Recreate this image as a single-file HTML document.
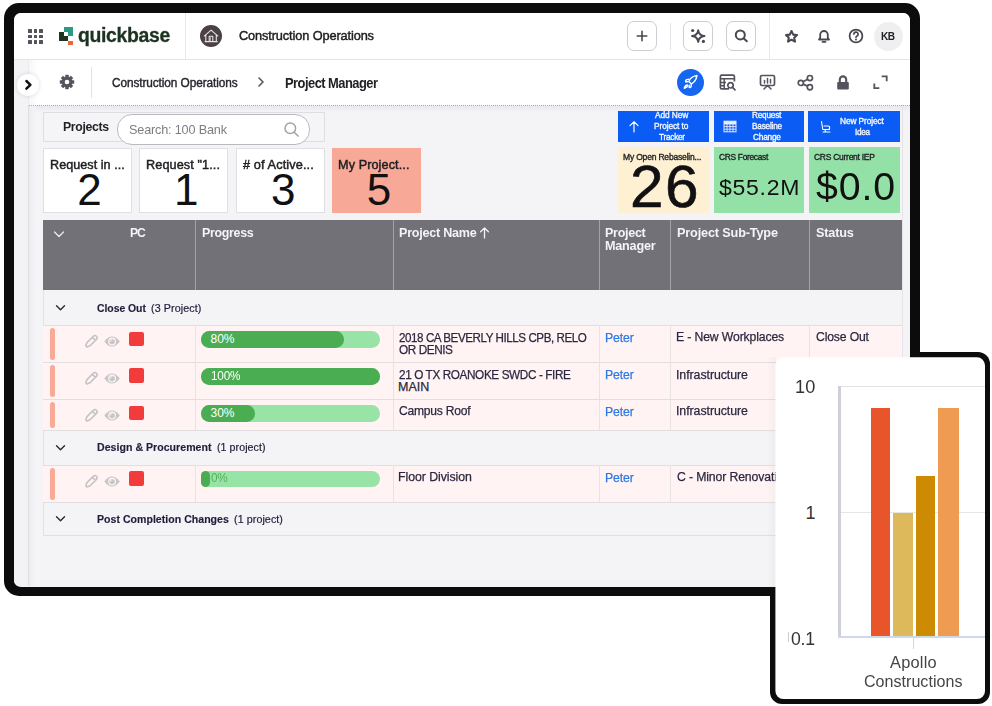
<!DOCTYPE html>
<html><head><meta charset="utf-8"><style>
html,body{margin:0;padding:0;}
body{width:992px;height:706px;position:relative;overflow:hidden;background:#fff;font-family:"Liberation Sans",sans-serif;}
.t{position:absolute;white-space:nowrap;line-height:1;font-family:"Liberation Sans",sans-serif;}
.L{position:absolute;left:0;top:0;width:992px;height:706px;}
</style></head><body>
<div class="L" style="filter:blur(0.7px)"><div style="position:absolute;left:4px;top:3px;width:916.00px;height:593.20px;background:#0c0c0c;border-radius:15px;"></div><div style="position:absolute;left:770px;top:352px;width:220.00px;height:352.00px;background:#0c0c0c;border-radius:12px;"></div></div>
<div class="L" style="clip-path:inset(13px 82px 119px 14px round 7px)"><div style="position:absolute;left:14px;top:13px;width:896.00px;height:574.00px;background:#f4f4f7;"></div><div style="position:absolute;left:14px;top:13px;width:896.00px;height:46.00px;background:#ffffff;"></div><div style="position:absolute;left:14px;top:59px;width:896.00px;height:1.00px;background:#e4e4e8;"></div><div style="position:absolute;left:185px;top:13px;width:1.00px;height:46.00px;background:#e8e8ec;"></div><div style="position:absolute;left:769px;top:13px;width:1.00px;height:46.00px;background:#e8e8ec;"></div><div style="position:absolute;left:28px;top:60px;width:882.00px;height:45.00px;background:#ffffff;"></div><div style="position:absolute;left:14px;top:60px;width:14.00px;height:526.00px;background:#f3f3f5;"></div><div style="position:absolute;left:28px;top:60px;width:1.00px;height:45.00px;background:#ebebee;"></div><div style="position:absolute;left:29px;top:60px;width:9.00px;height:45.00px;background:linear-gradient(90deg,rgba(0,0,0,0.035),rgba(0,0,0,0));"></div><div style="position:absolute;left:28px;top:105px;width:1.00px;height:481.00px;background:#dedee2;"></div><div style="position:absolute;left:29px;top:105px;width:881px;height:0;border-top:1px dotted #a9a9ae"></div><div style="position:absolute;left:29px;top:106px;width:881.00px;height:6.00px;background:linear-gradient(#e9e9ed,#f4f4f7);"></div><div style="position:absolute;left:29px;top:106px;width:6.00px;height:480.00px;background:linear-gradient(90deg,#ececf0,#f4f4f7);"></div><div style="position:absolute;left:902.4px;top:105px;width:1.00px;height:482.00px;background:#e4e4e8;"></div><div style="position:absolute;left:28.2px;top:29.2px;width:3.70px;height:3.70px;background:#57535d;border-radius:0.6px;"></div><div style="position:absolute;left:28.2px;top:34.55px;width:3.70px;height:3.70px;background:#57535d;border-radius:0.6px;"></div><div style="position:absolute;left:28.2px;top:39.9px;width:3.70px;height:3.70px;background:#57535d;border-radius:0.6px;"></div><div style="position:absolute;left:33.55px;top:29.2px;width:3.70px;height:3.70px;background:#57535d;border-radius:0.6px;"></div><div style="position:absolute;left:33.55px;top:34.55px;width:3.70px;height:3.70px;background:#57535d;border-radius:0.6px;"></div><div style="position:absolute;left:33.55px;top:39.9px;width:3.70px;height:3.70px;background:#57535d;border-radius:0.6px;"></div><div style="position:absolute;left:38.9px;top:29.2px;width:3.70px;height:3.70px;background:#57535d;border-radius:0.6px;"></div><div style="position:absolute;left:38.9px;top:34.55px;width:3.70px;height:3.70px;background:#57535d;border-radius:0.6px;"></div><div style="position:absolute;left:38.9px;top:39.9px;width:3.70px;height:3.70px;background:#57535d;border-radius:0.6px;"></div><div style="position:absolute;left:59px;top:31.5px;width:9.00px;height:9.00px;background:#1f3523;"></div><div style="position:absolute;left:63.5px;top:27px;width:9.00px;height:9.00px;background:#2b9a80;"></div><div style="position:absolute;left:63.5px;top:31.5px;width:4.50px;height:4.50px;background:#ffffff;"></div><div style="position:absolute;left:68px;top:40.5px;width:4.70px;height:4.50px;background:#f0643a;"></div><div style="position:absolute;left:200px;top:25px;width:22px;height:22px;border-radius:50%;background:#4b4144"></div><svg style="position:absolute;left:200px;top:25px" width="22" height="22" viewBox="0 0 22 22"><path d="M3.9 11.4 L11.1 5.2 L18.2 11.4 M5.8 10 V16.4 M16.3 10 V16.4 M9.2 16.4 V11.3 H12.8 V16.4 M4.6 16.6 H17.6" fill="none" stroke="#e6e3e4" stroke-width="1.1" stroke-linejoin="round"/><path d="M10.4 12.2 V16.2" stroke="#e6e3e4" stroke-width="0.7"/></svg><div style="position:absolute;left:626.5px;top:21px;width:28px;height:28px;border:1px solid #cdcdd2;border-radius:7px;background:#fff"></div><div style="position:absolute;left:683.2px;top:21px;width:28px;height:28px;border:1px solid #cdcdd2;border-radius:7px;background:#fff"></div><div style="position:absolute;left:726.2px;top:21px;width:28px;height:28px;border:1px solid #cdcdd2;border-radius:7px;background:#fff"></div><div style="position:absolute;left:670px;top:22.5px;width:1.00px;height:27.20px;background:#e4e4e8;"></div><svg style="position:absolute;left:634px;top:28px" width="16" height="16" viewBox="0 0 16 16"><path d="M8 3.2 V12.8 M3.2 8 H12.8" stroke="#4b4751" stroke-width="1.6" stroke-linecap="round"/></svg><svg style="position:absolute;left:690px;top:28px" width="16" height="16" viewBox="0 0 16 16"><path d="M8.2 2.3 Q8.9 7.3 14.4 8.1 Q8.9 8.9 8.2 13.8 Q7.5 8.9 2.1 8.1 Q7.5 7.3 8.2 2.3 Z" fill="none" stroke="#4b4751" stroke-width="2" stroke-linejoin="round"/><circle cx="2.7" cy="2.5" r="1.6" fill="#4b4751"/><circle cx="13.4" cy="13.4" r="1.6" fill="#4b4751"/></svg><svg style="position:absolute;left:732px;top:28px" width="16" height="16" viewBox="0 0 16 16"><circle cx="8.3" cy="6.9" r="4.5" fill="none" stroke="#4b4751" stroke-width="2"/><path d="M11.6 10.2 L14.8 13.3" stroke="#4b4751" stroke-width="2" stroke-linecap="round"/></svg><svg style="position:absolute;left:783px;top:28px" width="17" height="16" viewBox="0 0 17 16"><path d="M8.5 3 L10.2 6.6 L14 7.1 L11.2 9.7 L12 13.6 L8.5 11.7 L5 13.6 L5.8 9.7 L3 7.1 L6.8 6.6 Z" fill="none" stroke="#4b4751" stroke-width="2.1" stroke-linejoin="round"/></svg><svg style="position:absolute;left:816px;top:28px" width="16" height="16" viewBox="0 0 16 16"><path d="M3 11.5 H13 L11.8 9.8 V6.8 A3.8 3.8 0 0 0 4.2 6.8 V9.8 Z" fill="none" stroke="#4b4751" stroke-width="1.8" stroke-linejoin="round"/><path d="M6.5 13.8 H9.5" stroke="#4b4751" stroke-width="1.8" stroke-linecap="round"/></svg><svg style="position:absolute;left:848px;top:28px" width="16" height="16" viewBox="0 0 16 16"><circle cx="8" cy="8" r="6.4" fill="none" stroke="#4b4751" stroke-width="1.8"/><path d="M5.9 6.3 A2.1 2.1 0 1 1 8.6 8.2 Q8 8.5 8 9.4" fill="none" stroke="#4b4751" stroke-width="1.6" stroke-linecap="round"/><circle cx="8" cy="11.5" r="1" fill="#4b4751"/></svg><div style="position:absolute;left:874px;top:22px;width:29px;height:29px;border-radius:50%;background:#efeff0"></div><div style="position:absolute;left:17.2px;top:74.3px;width:21.5px;height:21.5px;border-radius:50%;background:#fff;box-shadow:0 0 4px rgba(0,0,0,0.14)"></div><svg style="position:absolute;left:22px;top:78px" width="12" height="14" viewBox="0 0 12 14"><path d="M4.4 3 L8.4 6.8 L4.4 10.6" fill="none" stroke="#111" stroke-width="2.5" stroke-linecap="round" stroke-linejoin="round"/></svg><svg style="position:absolute;left:58.6px;top:74.3px" width="16" height="16" viewBox="0 0 16 16"><g transform="translate(8 8)"><path d="M-1.57 -5.06 L-1.41 -6.96 L1.41 -6.96 L1.57 -5.06 L2.47 -4.69 L3.92 -5.92 L5.92 -3.92 L4.69 -2.47 L5.06 -1.57 L6.96 -1.41 L6.96 1.41 L5.06 1.57 L4.69 2.47 L5.92 3.92 L3.92 5.92 L2.47 4.69 L1.57 5.06 L1.41 6.96 L-1.41 6.96 L-1.57 5.06 L-2.47 4.69 L-3.92 5.92 L-5.92 3.92 L-4.69 2.47 L-5.06 1.57 L-6.96 1.41 L-6.96 -1.41 L-5.06 -1.57 L-4.69 -2.47 L-5.92 -3.92 L-3.92 -5.92 L-2.47 -4.69 Z" fill="#56525e" stroke="#56525e" stroke-width="0.5" stroke-linejoin="round"/><circle r="2.3" fill="#fff"/></g></svg><div style="position:absolute;left:91px;top:67px;width:1.00px;height:31.00px;background:#e2e2e6;"></div><svg style="position:absolute;left:256px;top:76px" width="10" height="12" viewBox="0 0 10 12"><path d="M3 2 L7 6 L3 10" fill="none" stroke="#555" stroke-width="1.6" stroke-linecap="round" stroke-linejoin="round"/></svg><div style="position:absolute;left:677.3px;top:68.8px;width:27px;height:27px;border-radius:50%;background:#1766f0"></div><svg style="position:absolute;left:676px;top:68px" width="30" height="30" viewBox="0 0 30 30"><g fill="none" stroke="#fff" stroke-width="1.4" stroke-linejoin="round"><path d="M12.9 13.4 Q14.6 8.6 21 7.4 Q19.9 13.8 15.3 15.9 Z"/><path d="M13 11.3 L10.6 11.6 Q9.3 12.4 9.6 13.8 L12.4 13.7"/><path d="M15.4 16 L15.1 18.6 Q14.4 19.8 13.2 19.6 L13.3 16.8"/><path d="M11.7 16.6 Q9 17 8.3 20.2 Q11.5 19.6 12 17.2"/></g></svg><svg style="position:absolute;left:719px;top:73.5px" width="18" height="18" viewBox="0 0 18 18"><path d="M10 14.8 H2.8 A1.4 1.4 0 0 1 1.4 13.4 V2.6 A1.4 1.4 0 0 1 2.8 1.2 H14 A1.4 1.4 0 0 1 15.4 2.6 V7.5" fill="none" stroke="#56525e" stroke-width="1.7"/><path d="M1.4 4.8 H15.4 M1.4 8.4 H7 M1.4 11.8 H6 M5.2 4.8 V14.8" stroke="#56525e" stroke-width="1.5"/><circle cx="11.5" cy="11.3" r="2.7" fill="none" stroke="#56525e" stroke-width="1.7"/><path d="M13.4 13.2 L16 15.8" stroke="#56525e" stroke-width="1.7" stroke-linecap="round"/></svg><svg style="position:absolute;left:759px;top:74px" width="17" height="17" viewBox="0 0 17 17"><rect x="1.5" y="1.5" width="14" height="10" rx="1.5" fill="none" stroke="#56525e" stroke-width="1.7"/><path d="M5.5 9 V6.5 M8.5 9 V4.5 M11.5 9 V5.5 M8.5 11.5 L5 15 M8.5 11.5 L12 15" stroke="#56525e" stroke-width="1.5" stroke-linecap="round"/></svg><svg style="position:absolute;left:797px;top:73.5px" width="17" height="17" viewBox="0 0 17 17"><circle cx="3.8" cy="8.9" r="2.6" fill="none" stroke="#56525e" stroke-width="1.7"/><circle cx="12.9" cy="4.1" r="2.6" fill="none" stroke="#56525e" stroke-width="1.7"/><circle cx="12.9" cy="13.3" r="2.6" fill="none" stroke="#56525e" stroke-width="1.7"/><path d="M6.1 7.7 L10.6 5.3 M6.1 10.1 L10.6 12.1" stroke="#56525e" stroke-width="1.7"/></svg><svg style="position:absolute;left:835px;top:74px" width="16" height="17" viewBox="0 0 16 17"><path d="M4.8 8 V5.6 A3.2 3.2 0 0 1 11.2 5.6 V8" fill="none" stroke="#56525e" stroke-width="2.1"/><rect x="2.2" y="8" width="11.6" height="7.4" rx="1" fill="#56525e"/></svg><svg style="position:absolute;left:872px;top:74px" width="17" height="17" viewBox="0 0 17 17"><path d="M10.6 2.3 H14.7 V6.4 M2.3 10.5 V14.1 H6.4" fill="none" stroke="#56525e" stroke-width="1.8" stroke-linecap="square"/></svg><div style="position:absolute;left:42.5px;top:112.3px;width:280.5px;height:28.2px;border:1px solid #dedee2;background:#f5f5f8"></div><div style="position:absolute;left:117px;top:114.3px;width:190.5px;height:28.4px;border:1px solid #b9b9be;border-radius:15px;background:#fff"></div><svg style="position:absolute;left:282.5px;top:121px" width="17" height="17" viewBox="0 0 17 17"><circle cx="7.3" cy="7.3" r="5.3" fill="none" stroke="#a3a3a8" stroke-width="1.5"/><path d="M11.2 11.2 L15 15" stroke="#a3a3a8" stroke-width="1.6" stroke-linecap="round"/></svg><div style="position:absolute;left:42.5px;top:148px;width:87.8px;height:62.5px;border:1px solid #e0e0e4;background:#fff"></div><div style="position:absolute;left:139.4px;top:148px;width:87.1px;height:62.5px;border:1px solid #e0e0e4;background:#fff"></div><div style="position:absolute;left:235.6px;top:148px;width:87.2px;height:62.5px;border:1px solid #e0e0e4;background:#fff"></div><div style="position:absolute;left:331.8px;top:148px;width:89.20px;height:64.50px;background:#f8a897;"></div><div style="position:absolute;left:618.2px;top:146.8px;width:91.20px;height:66.00px;background:#fdf0d3;"></div><div style="position:absolute;left:713.8px;top:146.8px;width:90.20px;height:66.00px;background:#94e1a8;"></div><div style="position:absolute;left:808.8px;top:146.8px;width:90.80px;height:66.00px;background:#94e1a8;"></div><div style="position:absolute;left:617.9px;top:110.8px;width:91.50px;height:31.20px;background:#0b5cf5;"></div><div style="position:absolute;left:713.5px;top:110.8px;width:90.70px;height:31.20px;background:#0b5cf5;"></div><div style="position:absolute;left:808.4px;top:110.8px;width:91.20px;height:31.20px;background:#0b5cf5;"></div><svg style="position:absolute;left:628px;top:120px" width="12" height="13" viewBox="0 0 12 13"><path d="M6 12 V1.8 M2 5.6 L6 1.6 L10 5.6" fill="none" stroke="#fff" stroke-width="1.2" stroke-linecap="round" stroke-linejoin="round"/></svg><svg style="position:absolute;left:723px;top:120px" width="14" height="13" viewBox="0 0 14 13"><rect x="1" y="1.2" width="12" height="10.6" fill="none" stroke="#e8eeff" stroke-width="1"/><path d="M1 4 H13 M1 6.6 H13 M1 9.2 H13 M4 4 V11.8 M7 4 V11.8 M10 4 V11.8" stroke="#e8eeff" stroke-width="0.9"/><rect x="1" y="1.2" width="12" height="2.8" fill="#e8eeff"/></svg><svg style="position:absolute;left:819px;top:120px" width="13" height="13" viewBox="0 0 13 13"><path d="M2.5 1.5 L3.8 9.5 H10.5 M5 6 H9 A1.6 1.6 0 0 1 9 9.5 M4 12 H11 M6.2 9.5 V12" fill="none" stroke="#fff" stroke-width="1.1" stroke-linecap="round" stroke-linejoin="round"/></svg><div style="position:absolute;left:43.3px;top:220px;width:859.10px;height:70.00px;background:#727178;"></div><div style="position:absolute;left:195.3px;top:220px;width:1.00px;height:70.00px;background:#a3a2a8;"></div><div style="position:absolute;left:392.7px;top:220px;width:1.00px;height:70.00px;background:#a3a2a8;"></div><div style="position:absolute;left:598.9px;top:220px;width:1.00px;height:70.00px;background:#a3a2a8;"></div><div style="position:absolute;left:669.9px;top:220px;width:1.00px;height:70.00px;background:#a3a2a8;"></div><div style="position:absolute;left:808.9px;top:220px;width:1.00px;height:70.00px;background:#a3a2a8;"></div><svg style="position:absolute;left:52px;top:229px" width="14" height="10" viewBox="0 0 14 10"><path d="M2.5 3 L7 7.5 L11.5 3" fill="none" stroke="#ececf0" stroke-width="1.3" stroke-linecap="round" stroke-linejoin="round"/></svg><svg style="position:absolute;left:478px;top:226px" width="13" height="13" viewBox="0 0 13 13"><path d="M6.5 12 V2 M2.6 5.8 L6.5 1.9 L10.4 5.8" fill="none" stroke="#f4f4f6" stroke-width="1.3" stroke-linecap="round" stroke-linejoin="round"/></svg><div style="position:absolute;left:43.3px;top:290px;width:859.10px;height:245.50px;background:#f4f4f7;border-left:1px solid #e2e2e6;box-sizing:border-box;"></div><div style="position:absolute;left:43.3px;top:325.4px;width:859.10px;height:36.90px;background:#fff4f3;"></div><div style="position:absolute;left:43.3px;top:362.3px;width:859.10px;height:37.20px;background:#fff4f3;"></div><div style="position:absolute;left:43.3px;top:399.5px;width:859.10px;height:30.90px;background:#fff4f3;"></div><div style="position:absolute;left:43.3px;top:465px;width:859.10px;height:37.00px;background:#fff4f3;"></div><div style="position:absolute;left:43.3px;top:324.9px;width:859.10px;height:1.00px;background:#e3dfe0;"></div><div style="position:absolute;left:43.3px;top:361.8px;width:859.10px;height:1.00px;background:#e3dfe0;"></div><div style="position:absolute;left:43.3px;top:399.0px;width:859.10px;height:1.00px;background:#e3dfe0;"></div><div style="position:absolute;left:43.3px;top:429.9px;width:859.10px;height:1.00px;background:#e3dfe0;"></div><div style="position:absolute;left:43.3px;top:464.5px;width:859.10px;height:1.00px;background:#e3dfe0;"></div><div style="position:absolute;left:43.3px;top:501.5px;width:859.10px;height:1.00px;background:#e3dfe0;"></div><div style="position:absolute;left:43.3px;top:535.0px;width:859.10px;height:1.00px;background:#e3dfe0;"></div><div style="position:absolute;left:195.3px;top:325.4px;width:1.00px;height:36.90px;background:#e8e2e2;"></div><div style="position:absolute;left:392.7px;top:325.4px;width:1.00px;height:36.90px;background:#e8e2e2;"></div><div style="position:absolute;left:598.9px;top:325.4px;width:1.00px;height:36.90px;background:#e8e2e2;"></div><div style="position:absolute;left:669.9px;top:325.4px;width:1.00px;height:36.90px;background:#e8e2e2;"></div><div style="position:absolute;left:808.9px;top:325.4px;width:1.00px;height:36.90px;background:#e8e2e2;"></div><div style="position:absolute;left:195.3px;top:362.3px;width:1.00px;height:37.20px;background:#e8e2e2;"></div><div style="position:absolute;left:392.7px;top:362.3px;width:1.00px;height:37.20px;background:#e8e2e2;"></div><div style="position:absolute;left:598.9px;top:362.3px;width:1.00px;height:37.20px;background:#e8e2e2;"></div><div style="position:absolute;left:669.9px;top:362.3px;width:1.00px;height:37.20px;background:#e8e2e2;"></div><div style="position:absolute;left:808.9px;top:362.3px;width:1.00px;height:37.20px;background:#e8e2e2;"></div><div style="position:absolute;left:195.3px;top:399.5px;width:1.00px;height:30.90px;background:#e8e2e2;"></div><div style="position:absolute;left:392.7px;top:399.5px;width:1.00px;height:30.90px;background:#e8e2e2;"></div><div style="position:absolute;left:598.9px;top:399.5px;width:1.00px;height:30.90px;background:#e8e2e2;"></div><div style="position:absolute;left:669.9px;top:399.5px;width:1.00px;height:30.90px;background:#e8e2e2;"></div><div style="position:absolute;left:808.9px;top:399.5px;width:1.00px;height:30.90px;background:#e8e2e2;"></div><div style="position:absolute;left:195.3px;top:465px;width:1.00px;height:37.00px;background:#e8e2e2;"></div><div style="position:absolute;left:392.7px;top:465px;width:1.00px;height:37.00px;background:#e8e2e2;"></div><div style="position:absolute;left:598.9px;top:465px;width:1.00px;height:37.00px;background:#e8e2e2;"></div><div style="position:absolute;left:669.9px;top:465px;width:1.00px;height:37.00px;background:#e8e2e2;"></div><div style="position:absolute;left:808.9px;top:465px;width:1.00px;height:37.00px;background:#e8e2e2;"></div><svg style="position:absolute;left:54px;top:302.7px" width="13" height="10" viewBox="0 0 13 10"><path d="M2.5 2.8 L6.5 6.8 L10.5 2.8" fill="none" stroke="#2a2630" stroke-width="1.4" stroke-linecap="round" stroke-linejoin="round"/></svg><svg style="position:absolute;left:54px;top:442.7px" width="13" height="10" viewBox="0 0 13 10"><path d="M2.5 2.8 L6.5 6.8 L10.5 2.8" fill="none" stroke="#2a2630" stroke-width="1.4" stroke-linecap="round" stroke-linejoin="round"/></svg><svg style="position:absolute;left:54px;top:513.75px" width="13" height="10" viewBox="0 0 13 10"><path d="M2.5 2.8 L6.5 6.8 L10.5 2.8" fill="none" stroke="#2a2630" stroke-width="1.4" stroke-linecap="round" stroke-linejoin="round"/></svg><div style="position:absolute;left:49.8px;top:328.0px;width:5.20px;height:31.90px;background:#f8aa97;border-radius:3px;"></div><svg style="position:absolute;left:83.5px;top:334.29999999999995px" width="15" height="15" viewBox="0 0 15 15"><g transform="translate(7.6 7.1) rotate(45)"><path d="M -2.2 -4.6 A 2.2 2.2 0 0 1 2.2 -4.6 V 4.4 L 0.8 7.4 H -0.8 L -2.2 4.4 Z M -2.2 -3.2 H 2.2" fill="none" stroke="#c3c2c7" stroke-width="1.6" stroke-linejoin="round"/></g></svg><svg style="position:absolute;left:103.5px;top:335.9px" width="16" height="11" viewBox="0 0 16 11"><path d="M0.3 5.5 Q8 -4.6 15.8 5.5 Q8 15.6 0.3 5.5 Z" fill="#c6c5ca"/><circle cx="8.1" cy="5.5" r="3.9" fill="#fff4f3"/><circle cx="8.1" cy="5.6" r="2.7" fill="#c6c5ca"/><path d="M8.3 3.7 A1.9 1.9 0 0 0 6.3 5.5" stroke="#fff4f3" stroke-width="0.9" fill="none"/></svg><div style="position:absolute;left:129.4px;top:331.5px;width:14.40px;height:14.50px;background:#f23b3b;border-radius:2px;"></div><div style="position:absolute;left:201px;top:331.29999999999995px;width:179.00px;height:16.60px;background:#98e3a6;border-radius:8.3px;"></div><div style="position:absolute;left:201px;top:331.29999999999995px;width:143.20px;height:16.60px;background:#4bad52;border-radius:8.3px;"></div><div style="position:absolute;left:49.8px;top:364.90000000000003px;width:5.20px;height:32.20px;background:#f8aa97;border-radius:3px;"></div><svg style="position:absolute;left:83.5px;top:371.2px" width="15" height="15" viewBox="0 0 15 15"><g transform="translate(7.6 7.1) rotate(45)"><path d="M -2.2 -4.6 A 2.2 2.2 0 0 1 2.2 -4.6 V 4.4 L 0.8 7.4 H -0.8 L -2.2 4.4 Z M -2.2 -3.2 H 2.2" fill="none" stroke="#c3c2c7" stroke-width="1.6" stroke-linejoin="round"/></g></svg><svg style="position:absolute;left:103.5px;top:372.8px" width="16" height="11" viewBox="0 0 16 11"><path d="M0.3 5.5 Q8 -4.6 15.8 5.5 Q8 15.6 0.3 5.5 Z" fill="#c6c5ca"/><circle cx="8.1" cy="5.5" r="3.9" fill="#fff4f3"/><circle cx="8.1" cy="5.6" r="2.7" fill="#c6c5ca"/><path d="M8.3 3.7 A1.9 1.9 0 0 0 6.3 5.5" stroke="#fff4f3" stroke-width="0.9" fill="none"/></svg><div style="position:absolute;left:129.4px;top:368.40000000000003px;width:14.40px;height:14.50px;background:#f23b3b;border-radius:2px;"></div><div style="position:absolute;left:201px;top:368.2px;width:179.00px;height:16.60px;background:#98e3a6;border-radius:8.3px;"></div><div style="position:absolute;left:201px;top:368.2px;width:179.00px;height:16.60px;background:#4bad52;border-radius:8.3px;"></div><div style="position:absolute;left:49.8px;top:402.1px;width:5.20px;height:25.90px;background:#f8aa97;border-radius:3px;"></div><svg style="position:absolute;left:83.5px;top:408.4px" width="15" height="15" viewBox="0 0 15 15"><g transform="translate(7.6 7.1) rotate(45)"><path d="M -2.2 -4.6 A 2.2 2.2 0 0 1 2.2 -4.6 V 4.4 L 0.8 7.4 H -0.8 L -2.2 4.4 Z M -2.2 -3.2 H 2.2" fill="none" stroke="#c3c2c7" stroke-width="1.6" stroke-linejoin="round"/></g></svg><svg style="position:absolute;left:103.5px;top:410.0px" width="16" height="11" viewBox="0 0 16 11"><path d="M0.3 5.5 Q8 -4.6 15.8 5.5 Q8 15.6 0.3 5.5 Z" fill="#c6c5ca"/><circle cx="8.1" cy="5.5" r="3.9" fill="#fff4f3"/><circle cx="8.1" cy="5.6" r="2.7" fill="#c6c5ca"/><path d="M8.3 3.7 A1.9 1.9 0 0 0 6.3 5.5" stroke="#fff4f3" stroke-width="0.9" fill="none"/></svg><div style="position:absolute;left:129.4px;top:405.6px;width:14.40px;height:14.50px;background:#f23b3b;border-radius:2px;"></div><div style="position:absolute;left:201px;top:405.4px;width:179.00px;height:16.60px;background:#98e3a6;border-radius:8.3px;"></div><div style="position:absolute;left:201px;top:405.4px;width:53.70px;height:16.60px;background:#4bad52;border-radius:8.3px;"></div><div style="position:absolute;left:49.8px;top:467.6px;width:5.20px;height:32.00px;background:#f8aa97;border-radius:3px;"></div><svg style="position:absolute;left:83.5px;top:473.9px" width="15" height="15" viewBox="0 0 15 15"><g transform="translate(7.6 7.1) rotate(45)"><path d="M -2.2 -4.6 A 2.2 2.2 0 0 1 2.2 -4.6 V 4.4 L 0.8 7.4 H -0.8 L -2.2 4.4 Z M -2.2 -3.2 H 2.2" fill="none" stroke="#c3c2c7" stroke-width="1.6" stroke-linejoin="round"/></g></svg><svg style="position:absolute;left:103.5px;top:475.5px" width="16" height="11" viewBox="0 0 16 11"><path d="M0.3 5.5 Q8 -4.6 15.8 5.5 Q8 15.6 0.3 5.5 Z" fill="#c6c5ca"/><circle cx="8.1" cy="5.5" r="3.9" fill="#fff4f3"/><circle cx="8.1" cy="5.6" r="2.7" fill="#c6c5ca"/><path d="M8.3 3.7 A1.9 1.9 0 0 0 6.3 5.5" stroke="#fff4f3" stroke-width="0.9" fill="none"/></svg><div style="position:absolute;left:129.4px;top:471.1px;width:14.40px;height:14.50px;background:#f23b3b;border-radius:2px;"></div><div style="position:absolute;left:201px;top:470.9px;width:179.00px;height:16.60px;background:#98e3a6;border-radius:8.3px;"></div><div style="position:absolute;left:201px;top:470.9px;width:9.00px;height:16.60px;background:#4bad52;border-radius:8.3px;"></div><div style="position:absolute;left:766px;top:357px;width:10.00px;height:233.00px;background:linear-gradient(90deg,rgba(0,0,0,0),rgba(0,0,0,0.03));"></div><div class="t" style="left:77.60px;top:24.77px;font-size:20px;font-weight:bold;color:#1d3320;letter-spacing:-0.344px;transform:scaleX(0.9710);transform-origin:0 0;-webkit-text-stroke:0.3px #1d3320;">quickbase</div><div class="t" style="left:239.00px;top:28.79px;font-size:13px;font-weight:normal;color:#1e1e22;letter-spacing:-0.118px;transform:scaleX(0.9812);transform-origin:0 0;-webkit-text-stroke:0.45px #1e1e22;">Construction Operations</div><div class="t" style="left:881.00px;top:30.71px;font-size:10.5px;font-weight:bold;color:#222226;letter-spacing:-0.591px;transform:scaleX(0.9606);transform-origin:0 0;">KB</div><div class="t" style="left:112.00px;top:77.04px;font-size:12px;font-weight:normal;color:#26262c;letter-spacing:-0.086px;transform:scaleX(0.9851);transform-origin:0 0;-webkit-text-stroke:0.4px #26262c;">Construction Operations</div><div class="t" style="left:284.50px;top:75.65px;font-size:14px;font-weight:bold;color:#222226;letter-spacing:-0.571px;transform:scaleX(0.9213);transform-origin:0 0;">Project Manager</div><div class="t" style="left:63.40px;top:120.29px;font-size:13px;font-weight:bold;color:#222226;letter-spacing:-0.377px;transform:scaleX(0.9456);transform-origin:0 0;">Projects</div><div class="t" style="left:128.50px;top:122.89px;font-size:13px;font-weight:normal;color:#7d7d83;letter-spacing:-0.178px;transform:scaleX(0.9736);transform-origin:0 0;">Search: 100 Bank</div><div class="t" style="left:49.99px;top:158.62px;font-size:12.5px;font-weight:normal;color:#1e1e22;letter-spacing:0.043px;transform:scaleX(1.0077);transform-origin:0 0;-webkit-text-stroke:0.45px #1e1e22;">Request in ...</div><div class="t" style="left:145.99px;top:158.62px;font-size:12.5px;font-weight:normal;color:#1e1e22;letter-spacing:0.085px;transform:scaleX(1.0143);transform-origin:0 0;-webkit-text-stroke:0.45px #1e1e22;">Request "1...</div><div class="t" style="left:243.00px;top:158.62px;font-size:12.5px;font-weight:normal;color:#1e1e22;letter-spacing:0.104px;transform:scaleX(1.0193);transform-origin:0 0;-webkit-text-stroke:0.45px #1e1e22;"># of Active...</div><div class="t" style="left:338.49px;top:158.62px;font-size:12.5px;font-weight:normal;color:#1e1e22;letter-spacing:0.080px;transform:scaleX(1.0139);transform-origin:0 0;-webkit-text-stroke:0.45px #1e1e22;">My Project...</div><div class="t" style="left:77.30px;top:167.75px;font-size:44px;font-weight:normal;color:#111;">2</div><div class="t" style="left:174.00px;top:167.75px;font-size:44px;font-weight:normal;color:#111;">1</div><div class="t" style="left:271.00px;top:167.75px;font-size:44px;font-weight:normal;color:#111;">3</div><div class="t" style="left:366.70px;top:167.75px;font-size:44px;font-weight:normal;color:#111;">5</div><div class="t" style="left:623.20px;top:153.18px;font-size:9px;font-weight:normal;color:#1e1e22;letter-spacing:-0.217px;transform:scaleX(0.9497);transform-origin:0 0;-webkit-text-stroke:0.35px #1e1e22;">My Open Rebaselin...</div><div class="t" style="left:718.70px;top:153.18px;font-size:9px;font-weight:normal;color:#1e1e22;letter-spacing:-0.328px;transform:scaleX(0.9325);transform-origin:0 0;-webkit-text-stroke:0.35px #1e1e22;">CRS Forecast</div><div class="t" style="left:813.90px;top:153.18px;font-size:9px;font-weight:normal;color:#1e1e22;letter-spacing:-0.272px;transform:scaleX(0.9411);transform-origin:0 0;-webkit-text-stroke:0.35px #1e1e22;">CRS Current IEP</div><div class="t" style="left:630.15px;top:157.84px;font-size:59px;font-weight:normal;color:#111;letter-spacing:1.444px;transform:scaleX(1.0228);transform-origin:0 0;-webkit-text-stroke:0.6px #111;">26</div><div class="t" style="left:719.00px;top:176.57px;font-size:22px;font-weight:normal;color:#111;letter-spacing:0.695px;transform:scaleX(1.0460);transform-origin:0 0;">$55.2M</div><div class="t" style="left:815.50px;top:167.63px;font-size:38px;font-weight:normal;color:#111;letter-spacing:0.862px;transform:scaleX(1.0343);transform-origin:0 0;">$0.0</div><div class="t" style="left:654.60px;top:111.00px;font-size:8.5px;font-weight:normal;color:#f4f7ff;letter-spacing:-0.096px;transform:scaleX(0.9834);transform-origin:0 0;-webkit-text-stroke:0.35px #f4f7ff;">Add New</div><div class="t" style="left:654.40px;top:122.30px;font-size:8.5px;font-weight:normal;color:#f4f7ff;letter-spacing:-0.088px;transform:scaleX(0.9777);transform-origin:0 0;-webkit-text-stroke:0.35px #f4f7ff;">Project to</div><div class="t" style="left:658.60px;top:133.00px;font-size:8.5px;font-weight:normal;color:#f4f7ff;letter-spacing:-0.205px;transform:scaleX(0.9551);transform-origin:0 0;-webkit-text-stroke:0.35px #f4f7ff;">Tracker</div><div class="t" style="left:752.00px;top:111.00px;font-size:8.5px;font-weight:normal;color:#f4f7ff;letter-spacing:-0.191px;transform:scaleX(0.9631);transform-origin:0 0;-webkit-text-stroke:0.35px #f4f7ff;">Request</div><div class="t" style="left:751.80px;top:122.00px;font-size:8.5px;font-weight:normal;color:#f4f7ff;letter-spacing:-0.177px;transform:scaleX(0.9608);transform-origin:0 0;-webkit-text-stroke:0.35px #f4f7ff;">Baseline</div><div class="t" style="left:752.90px;top:133.10px;font-size:8.5px;font-weight:normal;color:#f4f7ff;letter-spacing:-0.185px;transform:scaleX(0.9683);transform-origin:0 0;-webkit-text-stroke:0.35px #f4f7ff;">Change</div><div class="t" style="left:840.00px;top:117.00px;font-size:8.5px;font-weight:normal;color:#f4f7ff;letter-spacing:-0.103px;transform:scaleX(0.9773);transform-origin:0 0;-webkit-text-stroke:0.35px #f4f7ff;">New Project</div><div class="t" style="left:854.50px;top:127.70px;font-size:8.5px;font-weight:normal;color:#f4f7ff;letter-spacing:-0.236px;transform:scaleX(0.9560);transform-origin:0 0;-webkit-text-stroke:0.35px #f4f7ff;">Idea</div><div class="t" style="left:129.60px;top:226.19px;font-size:13px;font-weight:bold;color:#f4f4f6;letter-spacing:-1.135px;transform:scaleX(0.9352);transform-origin:0 0;">PC</div><div class="t" style="left:201.50px;top:226.19px;font-size:13px;font-weight:bold;color:#f4f4f6;letter-spacing:-0.331px;transform:scaleX(0.9570);transform-origin:0 0;">Progress</div><div class="t" style="left:399.00px;top:225.79px;font-size:13px;font-weight:bold;color:#f4f4f6;letter-spacing:-0.244px;transform:scaleX(0.9666);transform-origin:0 0;">Project Name</div><div class="t" style="left:605.40px;top:225.79px;font-size:13px;font-weight:bold;color:#f4f4f6;letter-spacing:-0.279px;transform:scaleX(0.9612);transform-origin:0 0;">Project</div><div class="t" style="left:605.40px;top:239.19px;font-size:13px;font-weight:bold;color:#f4f4f6;letter-spacing:-0.233px;transform:scaleX(0.9731);transform-origin:0 0;">Manager</div><div class="t" style="left:677.00px;top:225.79px;font-size:13px;font-weight:bold;color:#f4f4f6;letter-spacing:-0.164px;transform:scaleX(0.9762);transform-origin:0 0;">Project Sub-Type</div><div class="t" style="left:815.60px;top:225.79px;font-size:13px;font-weight:bold;color:#f4f4f6;letter-spacing:-0.180px;transform:scaleX(0.9767);transform-origin:0 0;">Status</div><div class="t" style="left:96.70px;top:302.71px;font-size:10.5px;font-weight:bold;color:#231b3b;letter-spacing:-0.043px;transform:scaleX(0.9931);transform-origin:0 0;-webkit-text-stroke:0.15px #231b3b;">Close Out</div><div class="t" style="left:150.90px;top:302.71px;font-size:10.5px;font-weight:normal;color:#231b3b;letter-spacing:0.093px;transform:scaleX(1.0191);transform-origin:0 0;-webkit-text-stroke:0.2px #231b3b;">(3 Project)</div><div class="t" style="left:96.70px;top:442.31px;font-size:10.5px;font-weight:bold;color:#231b3b;letter-spacing:0.034px;transform:scaleX(1.0057);transform-origin:0 0;-webkit-text-stroke:0.15px #231b3b;">Design &amp; Procurement</div><div class="t" style="left:216.70px;top:442.31px;font-size:10.5px;font-weight:normal;color:#231b3b;letter-spacing:0.062px;transform:scaleX(1.0130);transform-origin:0 0;-webkit-text-stroke:0.2px #231b3b;">(1 project)</div><div class="t" style="left:96.70px;top:514.11px;font-size:10.5px;font-weight:bold;color:#231b3b;letter-spacing:0.026px;transform:scaleX(1.0044);transform-origin:0 0;-webkit-text-stroke:0.15px #231b3b;">Post Completion Changes</div><div class="t" style="left:233.60px;top:514.11px;font-size:10.5px;font-weight:normal;color:#231b3b;letter-spacing:0.082px;transform:scaleX(1.0171);transform-origin:0 0;-webkit-text-stroke:0.2px #231b3b;">(1 project)</div><div class="t" style="left:210.50px;top:332.74px;font-size:12px;font-weight:normal;color:#ffffff;letter-spacing:-0.012px;">80%</div><div class="t" style="left:210.50px;top:369.64px;font-size:12px;font-weight:normal;color:#ffffff;letter-spacing:-0.204px;transform:scaleX(0.9799);transform-origin:0 0;">100%</div><div class="t" style="left:210.50px;top:406.84px;font-size:12px;font-weight:normal;color:#ffffff;letter-spacing:-0.012px;">30%</div><div class="t" style="left:210.50px;top:472.34px;font-size:12px;font-weight:normal;color:#4bad52;letter-spacing:-0.337px;transform:scaleX(0.9806);transform-origin:0 0;opacity:0.9;">0%</div><div class="t" style="left:399.00px;top:332.12px;font-size:12.5px;font-weight:normal;color:#2b2740;letter-spacing:-0.475px;transform:scaleX(0.9299);transform-origin:0 0;-webkit-text-stroke:0.25px #2b2740;">2018 CA BEVERLY HILLS CPB, RELO</div><div class="t" style="left:399.00px;top:343.92px;font-size:12.5px;font-weight:normal;color:#2b2740;letter-spacing:-0.463px;transform:scaleX(0.9429);transform-origin:0 0;-webkit-text-stroke:0.25px #2b2740;">OR DENIS</div><div class="t" style="left:399.00px;top:368.72px;font-size:12.5px;font-weight:normal;color:#2b2740;letter-spacing:-0.416px;transform:scaleX(0.9408);transform-origin:0 0;-webkit-text-stroke:0.25px #2b2740;">21 O TX ROANOKE SWDC - FIRE</div><div class="t" style="left:398.00px;top:380.52px;font-size:12.5px;font-weight:normal;color:#2b2740;letter-spacing:-0.004px;-webkit-text-stroke:0.25px #2b2740;">MAIN</div><div class="t" style="left:399.00px;top:405.02px;font-size:12.5px;font-weight:normal;color:#2b2740;letter-spacing:-0.247px;transform:scaleX(0.9668);transform-origin:0 0;-webkit-text-stroke:0.25px #2b2740;">Campus Roof</div><div class="t" style="left:398.01px;top:470.92px;font-size:12.5px;font-weight:normal;color:#2b2740;letter-spacing:-0.068px;transform:scaleX(0.9881);transform-origin:0 0;-webkit-text-stroke:0.25px #2b2740;">Floor Division</div><div class="t" style="left:604.82px;top:332.32px;font-size:12.5px;font-weight:normal;color:#2f79e3;letter-spacing:-0.139px;transform:scaleX(0.9802);transform-origin:0 0;-webkit-text-stroke:0.25px #2f79e3;">Peter</div><div class="t" style="left:604.82px;top:368.82px;font-size:12.5px;font-weight:normal;color:#2f79e3;letter-spacing:-0.139px;transform:scaleX(0.9802);transform-origin:0 0;-webkit-text-stroke:0.25px #2f79e3;">Peter</div><div class="t" style="left:604.82px;top:405.62px;font-size:12.5px;font-weight:normal;color:#2f79e3;letter-spacing:-0.139px;transform:scaleX(0.9802);transform-origin:0 0;-webkit-text-stroke:0.25px #2f79e3;">Peter</div><div class="t" style="left:604.82px;top:471.82px;font-size:12.5px;font-weight:normal;color:#2f79e3;letter-spacing:-0.139px;transform:scaleX(0.9802);transform-origin:0 0;-webkit-text-stroke:0.25px #2f79e3;">Peter</div><div class="t" style="left:676.02px;top:331.32px;font-size:12.5px;font-weight:normal;color:#2b2740;letter-spacing:-0.140px;transform:scaleX(0.9783);transform-origin:0 0;-webkit-text-stroke:0.25px #2b2740;">E - New Workplaces</div><div class="t" style="left:815.60px;top:331.32px;font-size:12.5px;font-weight:normal;color:#2b2740;letter-spacing:-0.163px;transform:scaleX(0.9762);transform-origin:0 0;-webkit-text-stroke:0.25px #2b2740;">Close Out</div><div class="t" style="left:676.01px;top:368.62px;font-size:12.5px;font-weight:normal;color:#2b2740;letter-spacing:-0.065px;transform:scaleX(0.9883);transform-origin:0 0;-webkit-text-stroke:0.25px #2b2740;">Infrastructure</div><div class="t" style="left:676.01px;top:404.92px;font-size:12.5px;font-weight:normal;color:#2b2740;letter-spacing:-0.065px;transform:scaleX(0.9883);transform-origin:0 0;-webkit-text-stroke:0.25px #2b2740;">Infrastructure</div><div class="t" style="left:677.00px;top:470.92px;font-size:12.5px;font-weight:normal;color:#2b2740;letter-spacing:-0.128px;transform:scaleX(0.9790);transform-origin:0 0;-webkit-text-stroke:0.25px #2b2740;">C - Minor Renovations</div></div>
<div class="L" style="clip-path:inset(357.3px 7px 7px 775.4px round 8px)"><div style="position:absolute;left:775px;top:357px;width:210.00px;height:342.00px;background:#ffffff;"></div><div style="position:absolute;left:838.2px;top:386px;width:146.80px;height:1.00px;background:#e2e2e8;"></div><div style="position:absolute;left:838.2px;top:512.2px;width:146.80px;height:1.00px;background:#e6e6e6;"></div><div style="position:absolute;left:838.3px;top:386px;width:2.50px;height:251.00px;background:#cfcfd6;"></div><div style="position:absolute;left:838.2px;top:636.4px;width:146.80px;height:1.20px;background:#cfd8ea;"></div><div style="position:absolute;left:913px;top:637px;width:1.20px;height:12.00px;background:#cfd8ea;"></div><div style="position:absolute;left:870.7px;top:408.2px;width:19.50px;height:228.00px;background:#e8552b;"></div><div style="position:absolute;left:892.9px;top:513.3px;width:20.00px;height:122.90px;background:#ddb95c;"></div><div style="position:absolute;left:915.9px;top:475.8px;width:19.50px;height:160.40px;background:#cc8b02;"></div><div style="position:absolute;left:938.3px;top:408.2px;width:20.30px;height:228.00px;background:#f09b52;"></div><div style="position:absolute;left:788px;top:632px;width:1.00px;height:10.00px;background:#cccccc;"></div><div class="t" style="left:794.99px;top:377.96px;font-size:18px;font-weight:normal;color:#333;letter-spacing:0.145px;transform:scaleX(1.0076);transform-origin:0 0;">10</div><div class="t" style="left:805.40px;top:504.26px;font-size:18px;font-weight:normal;color:#333;">1</div><div class="t" style="left:791.00px;top:630.46px;font-size:18px;font-weight:normal;color:#333;letter-spacing:-0.253px;transform:scaleX(0.9794);transform-origin:0 0;">0.1</div><div class="t" style="left:890.05px;top:654.75px;font-size:16px;font-weight:normal;color:#454545;letter-spacing:0.212px;transform:scaleX(1.0232);transform-origin:0 0;">Apollo</div><div class="t" style="left:864.40px;top:674.45px;font-size:16px;font-weight:normal;color:#454545;letter-spacing:0.024px;transform:scaleX(1.0030);transform-origin:0 0;">Constructions</div></div>
</body></html>
